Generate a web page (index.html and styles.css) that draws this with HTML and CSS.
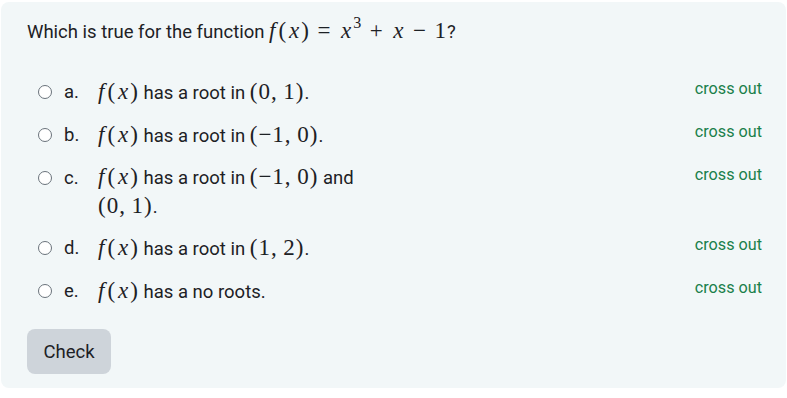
FILE: index.html
```html
<!DOCTYPE html>
<html lang="en">
<head>
    <meta charset="UTF-8">
    <meta name="viewport" content="width=device-width, initial-scale=1.0">
    <title>Question</title>
    <link rel="stylesheet" href="styles.css">
</head>
<body>
    <div class="que">
        <p class="qtext">Which is true for the function <span class="m"><i class="f">f</i>(<i>x</i>)<span class="op">=</span><i>x</i><sup>3</sup><span class="op">+</span><i>x</i><span class="op">−</span>1</span>?</p>
        <div class="answers">
            <div class="row">
                <span class="radio"></span>
                <span class="letter">a.</span>
                <span class="txt"><span class="m"><i class="f">f</i>(<i>x</i>)</span> has a root in <span class="m">(0,&thinsp;1)</span>.</span>
                <a class="cross" href="#">cross out</a>
            </div>
            <div class="row">
                <span class="radio"></span>
                <span class="letter">b.</span>
                <span class="txt"><span class="m"><i class="f">f</i>(<i>x</i>)</span> has a root in <span class="m">(−1,&thinsp;0)</span>.</span>
                <a class="cross" href="#">cross out</a>
            </div>
            <div class="row">
                <span class="radio"></span>
                <span class="letter">c.</span>
                <span class="txt narrow"><span class="m"><i class="f">f</i>(<i>x</i>)</span> has a root in <span class="m">(−1,&thinsp;0)</span> and <span class="m">(0,&thinsp;1)</span>.</span>
                <a class="cross" href="#">cross out</a>
            </div>
            <div class="row">
                <span class="radio"></span>
                <span class="letter">d.</span>
                <span class="txt"><span class="m"><i class="f">f</i>(<i>x</i>)</span> has a root in <span class="m">(1,&thinsp;2)</span>.</span>
                <a class="cross" href="#">cross out</a>
            </div>
            <div class="row">
                <span class="radio"></span>
                <span class="letter">e.</span>
                <span class="txt"><span class="m"><i class="f">f</i>(<i>x</i>)</span> has a no roots.</span>
                <a class="cross" href="#">cross out</a>
            </div>
        </div>
        <button class="check" type="button">Check</button>
    </div>
</body>
</html>
```

FILE: styles.css
```css
body{
    margin: 0;
    background: #fff;
    font-family: Roboto, "Liberation Sans", sans-serif;
    color: #1d2125;
}

.que{
    margin: 2px 1px;
    width: 785px;
    height: 386px;
    box-sizing: border-box;
    background: #f2f7f8;
    border-radius: 8px;
    padding: 16px 24px 0 26px;
}

.qtext{
    margin: 0 0 32px 0;
    font-size: 18.5px;
    line-height: 26px;
}

.m{
    font-family: "Liberation Serif", "DejaVu Serif", serif;
    font-size: 23px;
    letter-spacing: 1px;
}

.m i{
    padding: 0 2px;
    letter-spacing: 0;
}

.m i.f{
    padding: 0 3px 0 0;
}

.op{
    margin: 0 7.5px;
}

.m sup{
    font-size: 16px;
    vertical-align: 10px;
    line-height: 0;
}

.row{
    display: flex;
    align-items: flex-start;
    font-size: 18.5px;
    line-height: 30px;
    margin-bottom: 12px;
}

.radio{
    width: 12px;
    height: 12px;
    border: 1.5px solid #6a737b;
    border-radius: 50%;
    background: #fff;
    margin: 7.5px 0 0 11px;
    flex: none;
}

.letter{
    width: 34px;
    margin-left: 12px;
    flex: none;
}

.txt{
    flex: 1;
}

.narrow{
    flex: none;
    width: 275px;
    margin-right: auto;
    line-height: 28px;
}

.cross{
    font-size: 16.2px;
    color: #1a7f4b;
    text-decoration: none;
    line-height: 24px;
}

.check{
    margin-top: 10px;
    font-family: inherit;
    font-size: 18.5px;
    color: #1d2125;
    background: #ced4da;
    border: none;
    border-radius: 8px;
    width: 84px;
    height: 45px;
    padding: 0;
}
```
